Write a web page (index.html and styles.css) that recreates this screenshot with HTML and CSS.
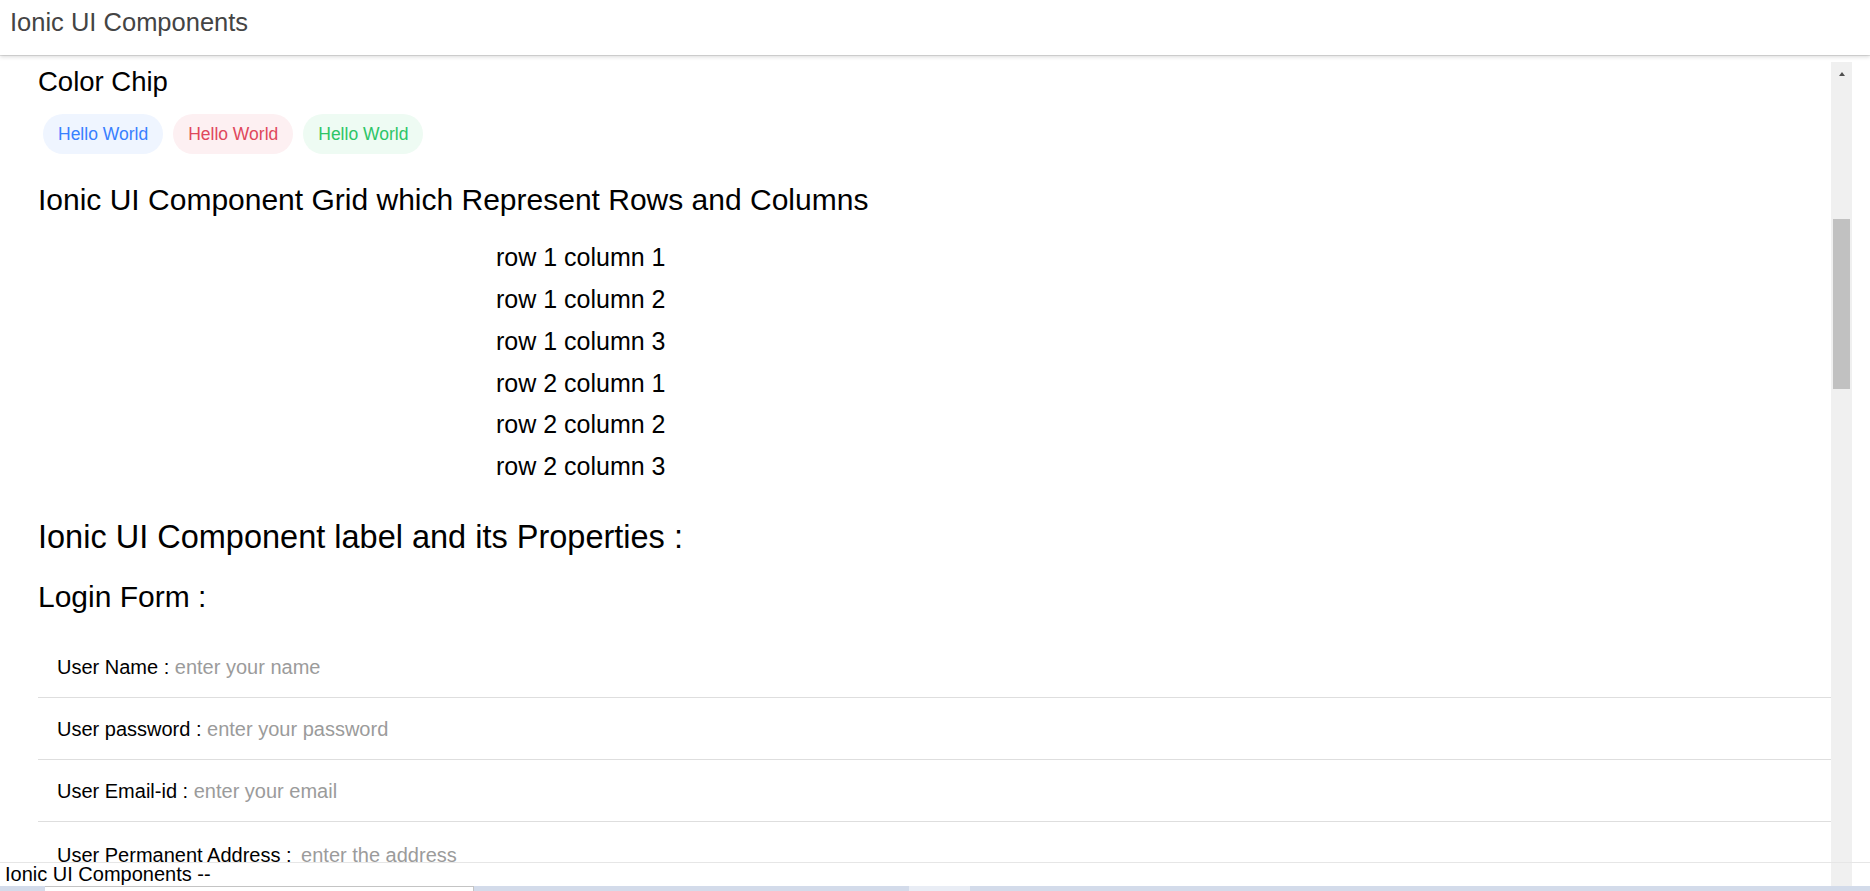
FILE: index.html
```html
<!DOCTYPE html>
<html lang="en">
<head>
<meta charset="utf-8">
<title>Ionic UI Components</title>
<link rel="stylesheet" href="styles.css">
</head>
<body>
<div class="app">
  <header class="toolbar">
    <div class="toolbar-title">Ionic UI Components</div>
  </header>
  <div class="shell">
    <main class="content">
      <h3 class="h-chip">Color Chip</h3>
      <div class="chips">
        <span class="chip chip-primary">Hello World</span>
        <span class="chip chip-danger">Hello World</span>
        <span class="chip chip-success">Hello World</span>
      </div>
      <h2 class="h-grid">Ionic UI Component Grid which Represent Rows and Columns</h2>
      <div class="grid">
        <div class="grid-row">
          <div class="col">row 1 column 1</div>
          <div class="col">row 1 column 2</div>
          <div class="col">row 1 column 3</div>
        </div>
        <div class="grid-row">
          <div class="col">row 2 column 1</div>
          <div class="col">row 2 column 2</div>
          <div class="col">row 2 column 3</div>
        </div>
      </div>
      <h1 class="h-label">Ionic UI Component label and its Properties :</h1>
      <h2 class="h-login">Login Form :</h2>
      <div class="list">
        <div class="item"><span class="lbl">User Name : </span><input class="field" type="text" placeholder="enter your name"></div>
        <div class="item"><span class="lbl">User password : </span><input class="field" type="password" placeholder="enter your password"></div>
        <div class="item"><span class="lbl">User Email-id : </span><input class="field" type="email" placeholder="enter your email"></div>
        <div class="item item-area"><span class="lbl">User Permanent Address : </span><input class="field field-area" type="text" placeholder="enter the address"></div>
      </div>
    </main>
    <div class="scrollbar">
      <div class="sb-arrow"></div>
      <div class="sb-track-top"></div>
      <div class="sb-thumb"></div>
    </div>
    <div class="edge"></div>
    <footer class="footer">Ionic UI Components --</footer>
  </div>
  <div class="taskbar">
    <div class="tb-box"></div>
    <div class="tb-light"></div>
  </div>
</div>
</body>
</html>
```
FILE: styles.css
```css
html, body {
  margin: 0;
  padding: 0;
  height: 891px;
  overflow: hidden;
  background: #fff;
  font-family: "Liberation Sans", Arial, sans-serif;
  color: #000;
}

.app {
  display: flex;
  flex-direction: column;
  height: 891px;
}

.toolbar {
  position: relative;
  z-index: 2;
  height: 55px;
  flex: 0 0 55px;
  display: flex;
  align-items: center;
  padding-left: 10px;
  background: #fff;
  box-shadow: 0 1px 0 rgba(0,0,0,0.10), 0 2px 4px rgba(0,0,0,0.14);
}

.toolbar-title {
  font-size: 25.5px;
  color: #444;
  line-height: 30px;
  padding-bottom: 11px;
}

.shell {
  position: relative;
  flex: 1 1 auto;
  display: flex;
  margin-top: 7px;
  min-height: 0;
}

.content {
  flex: 1 1 auto;
  overflow: hidden;
  padding-left: 38px;
}

h1, h2, h3 {
  font-weight: normal;
  margin: 0;
}

.h-chip {
  font-size: 27.5px;
  line-height: 33px;
  margin-top: 2.5px;
}

.chips {
  display: flex;
  margin-top: 16.5px;
}

.chip {
  display: inline-flex;
  align-items: center;
  height: 40px;
  padding: 0 15px;
  margin: 0 5px;
  border-radius: 20px;
  font-size: 17.5px;
}

.chip-primary { background: #eff5ff; color: #3880ff; }
.chip-danger { background: #fdf0f2; color: #e0485c; }
.chip-success { background: #eefbf3; color: #2dc567; }

.h-grid {
  font-size: 30px;
  line-height: 36px;
  margin-top: 28px;
}

.grid {
  margin-top: 19px;
  margin-left: 458px;
}

.col {
  font-size: 25px;
  line-height: 29px;
  padding: 6.25px 0 6.5px;
}

.h-label {
  font-size: 32.5px;
  line-height: 39px;
  margin-top: 30.5px;
}

.h-login {
  font-size: 30px;
  line-height: 36px;
  margin-top: 21.5px;
}

.list {
  margin-top: 21px;
}

.item {
  display: flex;
  align-items: center;
  height: 59px;
  padding-top: 2px;
  padding-left: 19px;
  border-bottom: 1px solid #dedede;
  font-size: 20px;
  white-space: pre;
}

.item-area {
  padding-top: 6px;
  height: 55px;
}

.field {
  flex: 1 1 auto;
  border: none;
  outline: none;
  padding: 0;
  margin: 0;
  background: transparent;
  font-family: "Liberation Sans", Arial, sans-serif;
  font-size: 20px;
  color: #000;
}

.field::placeholder {
  color: #9b9b9b;
}

.field-area {
  margin-left: 4px;
}

.scrollbar {
  flex: 0 0 21px;
  width: 21px;
  background: #f0f0f0;
  display: flex;
  flex-direction: column;
  align-items: center;
}

.sb-arrow {
  margin-top: 10px;
  width: 0;
  height: 0;
  border-left: 3.5px solid transparent;
  border-right: 3.5px solid transparent;
  border-bottom: 4px solid #505050;
}

.sb-track-top {
  height: 143px;
}

.sb-thumb {
  width: 17px;
  height: 170px;
  background: #c1c1c1;
}

.edge {
  flex: 0 0 18px;
  background: #fff;
}

.footer {
  position: absolute;
  left: 0;
  right: 0;
  bottom: 0;
  height: 23px;
  border-top: 1px solid #e6e6e6;
  background: linear-gradient(to right, #fff 1831px, rgba(240,240,240,0.9) 1831px, rgba(240,240,240,0.9) 1852px, #fff 1852px);
  padding-left: 5px;
  font-size: 20px;
  line-height: 23px;
  color: #000;
}

.taskbar {
  flex: 0 0 5px;
  height: 5px;
  display: flex;
  background: #d3dbea;
}

.tb-box {
  margin-left: 45px;
  width: 428px;
  background: #fff;
  border-top: 1px solid #c4c4c4;
  border-right: 1px solid #c4c4c4;
}

.tb-light {
  margin-left: 435px;
  width: 61px;
  background: #e9edf5;
}
```
